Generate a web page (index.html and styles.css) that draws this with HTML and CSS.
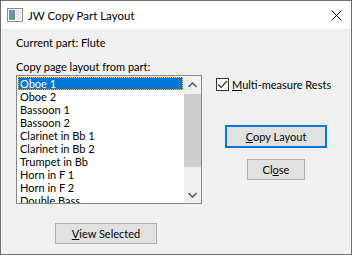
FILE: index.html
```html
<!DOCTYPE html>
<html lang="en">

<head>
    <meta charset="UTF-8">
    <title>JW Copy Part Layout</title>
    <link rel="stylesheet" href="styles.css">
</head>

<body>
    <div class="dialog">
        <header class="titlebar">
            <svg class="app-icon" width="16" height="14" viewBox="0 0 16 14">
                <rect x="0.5" y="0.5" width="15" height="13" fill="#fff" stroke="#8a8a8a"/>
                <rect x="2" y="2" width="6" height="10" fill="#5a9a9e"/>
                <rect x="2" y="2" width="6" height="4" fill="#6c8fc0"/>
                <rect x="9" y="2" width="5" height="10" fill="#e8e8e8"/>
            </svg>
            <span class="title">JW Copy Part Layout</span>
            <svg class="close-x" width="11" height="11" viewBox="0 0 11 11">
                <path d="M0.5 0.5 L10.5 10.5 M10.5 0.5 L0.5 10.5" stroke="#000" stroke-width="1"/>
            </svg>
        </header>

        <main class="content">
            <div class="left-col">
                <div class="current-part">Current part: Flute</div>
                <div class="list-label">Copy page layout from part:</div>
                <div class="listbox">
                    <ul class="items">
                        <li class="selected">Oboe 1</li>
                        <li>Oboe 2</li>
                        <li>Bassoon 1</li>
                        <li>Bassoon 2</li>
                        <li>Clarinet in Bb 1</li>
                        <li>Clarinet in Bb 2</li>
                        <li>Trumpet in Bb</li>
                        <li>Horn in F 1</li>
                        <li>Horn in F 2</li>
                        <li>Double Bass</li>
                    </ul>
                    <div class="scrollbar">
                        <div class="arrow">
                            <svg width="9" height="6" viewBox="0 0 9 6"><path d="M0.5 5 L4.5 1 L8.5 5" fill="none" stroke="#606060" stroke-width="1.6"/></svg>
                        </div>
                        <div class="track"><div class="thumb"></div></div>
                        <div class="arrow">
                            <svg width="9" height="6" viewBox="0 0 9 6"><path d="M0.5 1 L4.5 5 L8.5 1" fill="none" stroke="#606060" stroke-width="1.6"/></svg>
                        </div>
                    </div>
                </div>
                <button class="btn view-btn"><u>V</u>iew Selected</button>
            </div>

            <div class="right-col">
                <label class="check-row">
                    <span class="checkbox">
                        <svg width="11" height="9" viewBox="0 0 11 9"><path d="M1 4.5 L4 7.5 L10 1" fill="none" stroke="#333" stroke-width="1.2"/></svg>
                    </span>
                    <span><u>M</u>ulti-measure Rests</span>
                </label>
                <button class="btn copy-btn"><u>C</u>opy Layout</button>
                <button class="btn close-btn">Cl<u>o</u>se</button>
            </div>
        </main>
    </div>
</body>

</html>
```

FILE: styles.css
```css
* {
    margin: 0;
    padding: 0;
    box-sizing: border-box;
}

body {
    width: 352px;
    height: 255px;
    font-family: Lato, "Noto Sans", sans-serif;
    font-size: 11px;
    color: #000;
    background: #fff;
    overflow: hidden;
}

.dialog {
    width: 352px;
    height: 255px;
    border: 1px solid #6e6e6e;
    display: flex;
    flex-direction: column;
}

.titlebar {
    height: 28px;
    background: #fff;
    display: flex;
    align-items: center;
    padding: 0 9px 0 6px;
    flex-shrink: 0;
}

.app-icon {
    margin-right: 5px;
}

.title {
    flex: 1;
    font-size: 11.5px;
}

.content {
    flex: 1;
    background: #f0f0f0;
    display: flex;
    padding: 6px 0 0 15px;
}

.left-col {
    width: 186px;
    display: flex;
    flex-direction: column;
}

.current-part {
    height: 16px;
    line-height: 16px;
}

.list-label {
    margin-top: 8px;
    height: 16px;
    line-height: 16px;
}

.listbox {
    height: 129px;
    border: 1px solid #828790;
    background: #fff;
    display: flex;
    overflow: hidden;
}

.items {
    list-style: none;
    flex: 1;
    padding: 1px 1px 0 1px;
    overflow: hidden;
}

.items li {
    height: 13px;
    line-height: 13px;
    padding-left: 2px;
    white-space: nowrap;
}

.items li.selected {
    background: #0078d7;
    color: #fff;
    outline: 1px dotted #f2b25a;
    outline-offset: -1px;
}

.scrollbar {
    width: 17px;
    background: #f0f0f0;
    display: flex;
    flex-direction: column;
}

.arrow {
    height: 17px;
    display: flex;
    align-items: center;
    justify-content: center;
}

.track {
    flex: 1;
}

.thumb {
    height: 73px;
    margin-top: 1px;
    background: #cdcdcd;
}

.btn {
    font-family: inherit;
    font-size: 11px;
    color: #000;
    background: #e1e1e1;
    border: 1px solid #adadad;
    display: flex;
    align-items: center;
    justify-content: center;
}

.view-btn {
    margin-top: 19px;
    margin-left: 39px;
    width: 102px;
    height: 21px;
}

.right-col {
    margin-left: 14px;
    width: 120px;
    display: flex;
    flex-direction: column;
    align-items: center;
}

.check-row {
    align-self: flex-start;
    margin-top: 42px;
    height: 14px;
    display: flex;
    align-items: center;
    gap: 3px;
    white-space: nowrap;
}

.checkbox {
    width: 13px;
    height: 13px;
    border: 1px solid #333;
    background: #fff;
    display: flex;
    align-items: center;
    justify-content: center;
}

.copy-btn {
    margin-top: 34px;
    width: 102px;
    height: 23px;
    border: 2px solid #0078d7;
}

.close-btn {
    margin-top: 11px;
    width: 58px;
    height: 21px;
}
```
